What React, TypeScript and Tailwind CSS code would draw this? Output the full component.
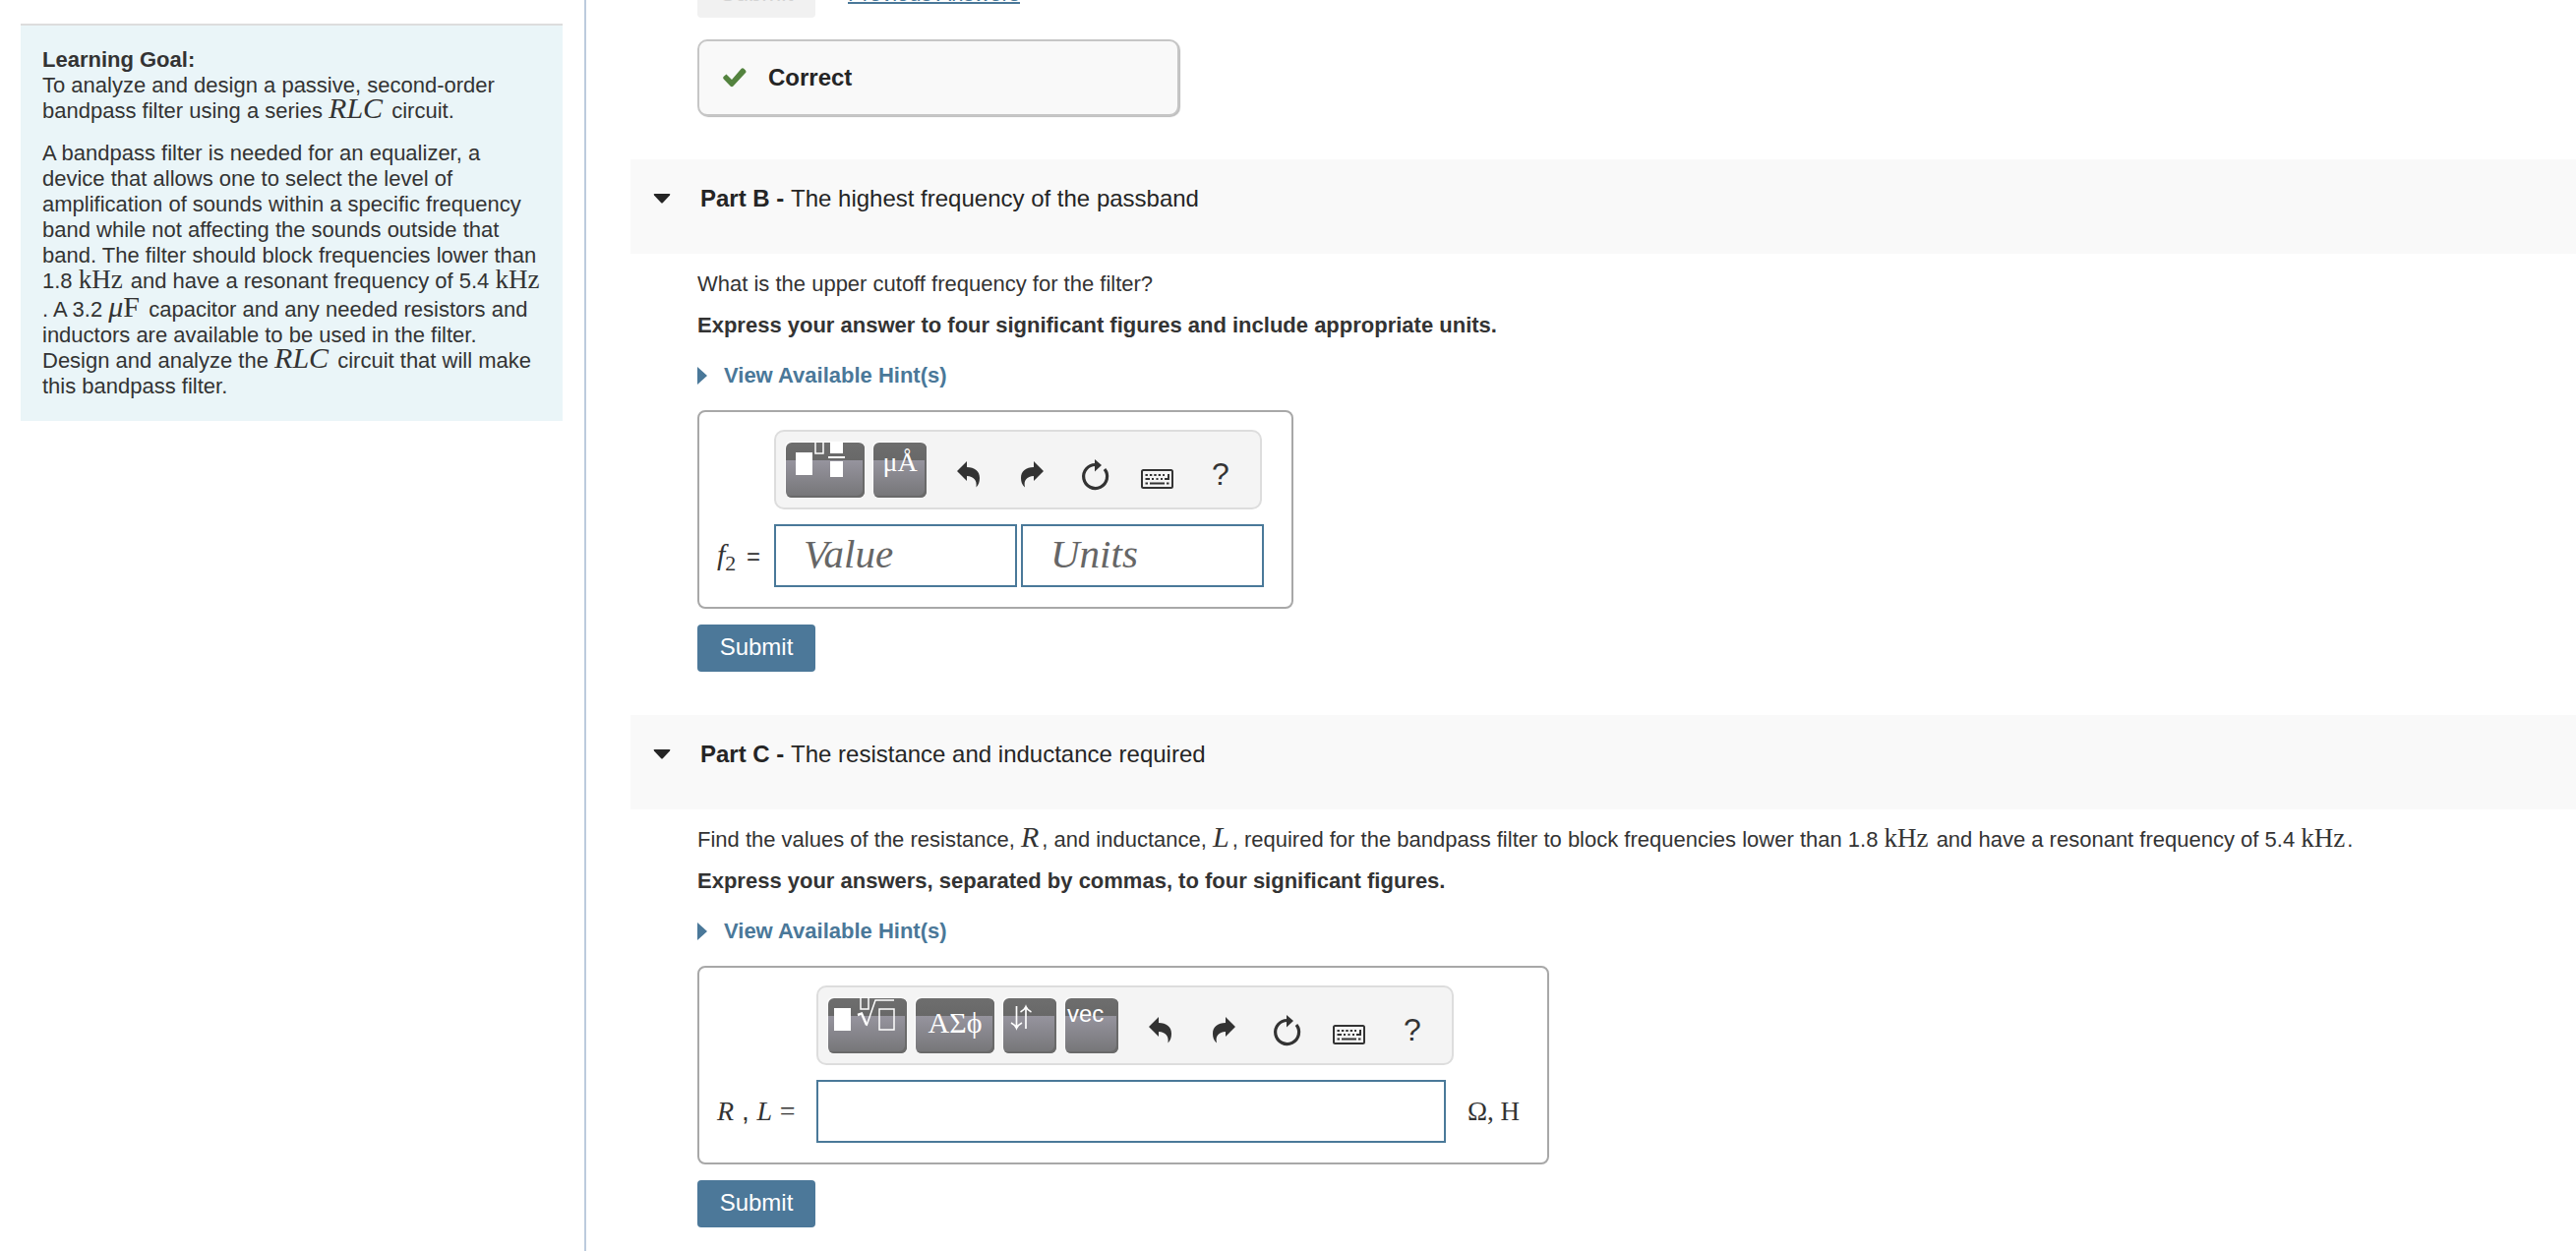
import type { ReactNode } from 'react';

const sans = "font-['Liberation_Sans',Arial,sans-serif]";
const serif = "font-['Liberation_Serif','Times_New_Roman',serif]";

function MathText({ children, italic = false }: { children: ReactNode; italic?: boolean }) {
  return (
    <span
      className={`${serif} inline-block leading-4 whitespace-nowrap ${
        italic ? 'pr-[3px] text-[30px] italic' : 'pr-0.5 text-[27px]'
      }`}
    >
      {children}
    </span>
  );
}

function ToolButton({
  label,
  wide = false,
  className = '',
  children,
}: {
  label: string;
  wide?: boolean;
  className?: string;
  children: ReactNode;
}) {
  return (
    <button
      type="button"
      aria-label={label}
      className={`flex h-14 shrink-0 items-start overflow-hidden rounded-md bg-[linear-gradient(#6e6e6e_0px,#686868_18px,#96949e_18px,#757577_56px)] text-white shadow-[-1px_-1px_1px_#ffffff,inset_-2px_-2px_0px_#6a6a6a] ${
        wide ? 'w-20' : 'w-[54px]'
      } ${className}`}
    >
      {children}
    </button>
  );
}

function IconButton({ label, children }: { label: string; children: ReactNode }) {
  return (
    <button type="button" aria-label={label} className="h-14 w-16 shrink-0 text-[#333333]">
      {children}
    </button>
  );
}

function EditIcons() {
  return (
    <div className="ml-[11px] flex">
      <IconButton label="Undo">
        <svg viewBox="0 0 64 56" className="h-14 w-16" fill="currentColor">
          <path d="M20 29 L30 19 V25 C38 25 43 29 43 36 C43 40 42 43 39.500 45.500 C40.500 38 37 34.500 30 34 V39 Z" />
        </svg>
      </IconButton>
      <IconButton label="Redo">
        <svg viewBox="0 0 64 56" className="h-14 w-16" fill="currentColor">
          <path d="M44 29 L34 19 V25 C26 25 21 29 21 36 C21 40 22 43 25 45.500 C23.500 38 27 34.500 34 34 V39 Z" />
        </svg>
      </IconButton>
      <IconButton label="Reset">
        <svg viewBox="0 0 64 56" className="h-14 w-16">
          <path
            d="M33 22.500 A12 12 0 1 0 42 27"
            fill="none"
            stroke="currentColor"
            strokeWidth="3.200"
          />
          <path d="M32 17 L39 23 L32 29.500 Z" fill="currentColor" />
        </svg>
      </IconButton>
      <IconButton label="Keyboard">
        <svg viewBox="0 0 64 56" className="h-14 w-16" fill="none" stroke="currentColor">
          <rect x="16" y="28" width="31" height="18" rx="1.500" strokeWidth="2" />
          <path d="M19.500 33 H39" strokeWidth="2" strokeDasharray="2.400 2" />
          <path d="M19.500 37 H24 M26 37 H28 M30.500 37 H32.500 M35 37 H37 M39 37 H43 V32" strokeWidth="2" />
          <path d="M19.500 41.500 H22 M24 41.500 H39 M41 41.500 H43.500" strokeWidth="2" />
        </svg>
      </IconButton>
      <IconButton label="Help">
        <span className="block pt-2 text-[32px] leading-12">?</span>
      </IconButton>
    </div>
  );
}

function Toolbar({ children }: { children: ReactNode }) {
  return (
    <div className="flex w-fit items-center rounded-[10px] border-2 border-[#dddddd] bg-[#f4f4f4] pt-[11px] pr-2 pb-[10px] pl-[10px]">
      <div className="flex gap-[9px]">{children}</div>
      <EditIcons />
    </div>
  );
}

function Submit() {
  return (
    <button
      type="submit"
      className="mt-4 block h-12 w-[120px] rounded-sm bg-[#4c7899] pb-0.5 text-2xl leading-7 text-white"
    >
      Submit
    </button>
  );
}

function Part({
  name,
  title,
  question,
  instruction,
  children,
}: {
  name: string;
  title: string;
  question: ReactNode;
  instruction: string;
  children: ReactNode;
}) {
  return (
    <section className="mt-11">
      <h2 className="flex h-24 items-start bg-[#f9f9f9] pt-[26px] pl-[23px] text-2xl leading-7 text-[#252525]">
        <button type="button" className="flex items-center">
          <svg viewBox="0 0 18 10" className="mr-[30px] h-[10px] w-[18px]" fill="currentColor">
            <path d="M1.500 0 H16.500 Q18 0 17 1.500 L10 9 Q9 10 8 9 L1 1.500 Q0 0 1.500 0 Z" />
          </svg>
          <span>
            <b>{name} - </b>
            {title}
          </span>
        </button>
      </h2>
      <form className="pt-[18px] pl-17" onSubmit={(e) => e.preventDefault()}>
        <p>{question}</p>
        <p className="mt-4 font-bold">{instruction}</p>
        <button type="button" className="mt-[25px] flex items-center font-bold text-[#4a7899]">
          <svg viewBox="0 0 10 18" className="mr-[17px] h-[18px] w-[10px]" fill="currentColor">
            <path d="M0 0 L10 9 L0 18 Z" />
          </svg>
          View Available Hint(s)
        </button>
        {children}
        <Submit />
      </form>
    </section>
  );
}

const field = 'h-16 border-2 border-[#4a7999] bg-white px-7 pb-1 text-[#333333] outline-none';

export default function App() {
  return (
    <div className={`${sans} flex min-h-screen overflow-hidden bg-white text-[22px] leading-[26px] text-[#333333]`}>
      <aside className="w-[596px] shrink-0 border-r-2 border-[#bccbdd] pt-6 pr-[22px] pl-[21px]">
        <div className="border-t-2 border-[#dddddd] bg-[#eaf5f8] p-[22px] pr-4">
          <p>
            <b>Learning Goal:</b>
            <br />
            To analyze and design a passive, second-order bandpass filter using a series{' '}
            <MathText italic>RLC</MathText> circuit.
          </p>
          <p className="mt-[17px]">
            A bandpass filter is needed for an equalizer, a device that allows one to select the level of
            amplification of sounds within a specific frequency band while not affecting the sounds outside
            that band. The filter should block frequencies lower than 1.8 <MathText>kHz</MathText> and have a
            resonant frequency of 5.4 <MathText>kHz</MathText>. A 3.2{' '}
            <span className={`${serif} inline-block pr-[3px] text-[30px] leading-[26px] whitespace-nowrap`}>
              <i>μ</i>F
            </span>{' '}
            capacitor and any needed resistors and inductors are available to be used in the filter. Design and
            analyze the <MathText italic>RLC</MathText> circuit that will make this bandpass filter.
          </p>
        </div>
      </aside>

      <main className="min-w-0 flex-1 pl-[45px]">
        {/* tail of Part A, scrolled under the top edge */}
        <div className="-mt-[30px] pl-17">
          <div className="flex items-start">
            <button
              type="button"
              disabled
              className="h-12 w-[120px] rounded-sm bg-[#f1f1f1] pb-0.5 text-2xl leading-7 text-[#d4d4d4]"
            >
              Submit
            </button>
            <a href="#answers" className="ml-[33px] h-[34px] border-b-2 border-[#4a7899] pt-[11px] text-[#4a7899]">
              Previous Answers
            </a>
          </div>
          <div className="mt-[22px] flex h-[78px] w-[490px] items-center rounded-[10px] border-2 border-[#c6c6c6] bg-[#f9f9f9] pl-6 text-2xl leading-7 font-bold text-[#252525] shadow-[1px_1px_1px_#bbbbbb]">
            <svg viewBox="0 0 24 20" className="mr-[22px] h-5 w-6" fill="#54833f">
              <path d="M3.500 6.500 L9 12 L18.500 1 Q20 -0.500 21.500 1 L23 2.500 Q24 4 23 5 L10.500 18.500 Q9 20 7.500 18.500 L0.800 11.500 Q-0.500 10 0.800 8.700 Z" />
            </svg>
            Correct
          </div>
        </div>

        <Part
          name="Part B"
          title="The highest frequency of the passband"
          question="What is the upper cutoff frequency for the filter?"
          instruction="Express your answer to four significant figures and include appropriate units."
        >
          <div className="mt-[22px] grid w-fit grid-cols-[58px_auto] items-center gap-y-[15px] rounded-lg border-2 border-[#a8a8a8] pt-[18px] pr-7 pb-5 pl-[18px]">
            <div className="col-start-2">
              <Toolbar>
                <ToolButton label="Templates" wide>
                  <svg viewBox="0 0 80 56" className="h-14 w-20" fill="none" stroke="#ffffff">
                    <path d="M10 10 H27 V33 H10 Z M45 0 H58 V11 H45 Z M45 19 H58 V35 H45 Z" fill="#ffffff" stroke="none" />
                    <path d="M30 -2 H38 V11 H30 Z" strokeWidth="1.500" />
                    <path d="M43 15 H60" strokeWidth="2" />
                  </svg>
                </ToolButton>
                <ToolButton label="Units" className="justify-center">
                  <span className={`${serif} text-[28px] leading-10`}>μÅ</span>
                </ToolButton>
              </Toolbar>
            </div>
            <label htmlFor="f2" className="text-[24px]">
              <i className={`${serif} text-[30px]`}>f</i>
              <sub className={`${serif} mr-1 text-[22px] leading-none`}>2</sub> =
            </label>
            <div className="flex gap-1">
              <input
                id="f2"
                type="text"
                placeholder="Value"
                className={`${field} ${serif} w-[247px] text-[41px] placeholder:text-[#666666] placeholder:italic`}
              />
              <input
                type="text"
                aria-label="Units"
                placeholder="Units"
                className={`${field} ${serif} w-[247px] text-[41px] placeholder:text-[#666666] placeholder:italic`}
              />
            </div>
          </div>
        </Part>

        <Part
          name="Part C"
          title="The resistance and inductance required"
          question={
            <>
              Find the values of the resistance, <MathText italic>R</MathText>, and inductance,{' '}
              <MathText italic>L</MathText>, required for the bandpass filter to block frequencies lower than 1.8{' '}
              <MathText>kHz</MathText> and have a resonant frequency of 5.4 <MathText>kHz</MathText>.
            </>
          }
          instruction="Express your answers, separated by commas, to four significant figures."
        >
          <div className="mt-[22px] grid w-fit grid-cols-[101px_auto] items-center gap-y-[15px] rounded-lg border-2 border-[#a8a8a8] pt-[18px] pr-7 pb-5 pl-[18px]">
            <div className="col-start-2">
              <Toolbar>
                <ToolButton label="Templates" wide>
                  <svg viewBox="0 0 80 56" className="h-14 w-20" fill="none" stroke="#ffffff">
                    <path d="M6 10 H23 V33 H6 Z" fill="#ffffff" stroke="none" />
                    <path d="M33 -2 H41 V11 H33 Z M52 11 H67 V32 H52 Z" strokeWidth="1.500" />
                    <path d="M30 17 L34 15.500 L39 27" strokeWidth="2.500" />
                    <path d="M39 28 L48 2 H67" strokeWidth="1.500" />
                  </svg>
                </ToolButton>
                <ToolButton label="Greek letters" wide className="justify-center">
                  <span className={`${serif} text-[30px] leading-[50px]`}>ΑΣϕ</span>
                </ToolButton>
                <ToolButton label="Arrows">
                  <svg viewBox="0 0 54 56" className="h-14 w-[54px]" fill="none" stroke="#ffffff" strokeWidth="1.700">
                    <path d="M13.500 8 V30 M8 25 Q12 27 13.500 30.500 Q15 27 19 25" />
                    <path d="M23 31 V9 M17.500 14 Q21.500 12 23 8.500 Q24.500 12 28.500 14" />
                  </svg>
                </ToolButton>
                <ToolButton label="Vectors" className="pl-0.5">
                  <span className="text-2xl leading-8">vec</span>
                </ToolButton>
              </Toolbar>
            </div>
            <label htmlFor="rl" className="text-[28px]">
              <i className={serif}>R</i> , <i className={serif}>L</i> <span className={serif}>=</span>
            </label>
            <div className="flex items-center gap-[22px]">
              <input id="rl" type="text" className={`${field} ${serif} w-[640px] text-[41px]`} />
              <span className={`${serif} text-[27px]`}>Ω, H</span>
            </div>
          </div>
        </Part>
      </main>
    </div>
  );
}
